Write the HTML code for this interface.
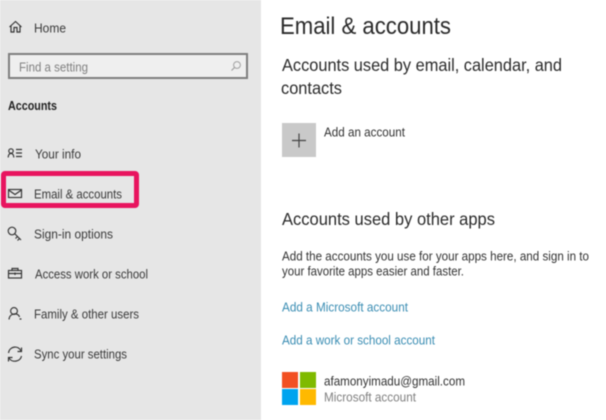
<!DOCTYPE html>
<html lang="en">
<head>
<meta charset="utf-8">
<title>Email &amp; accounts</title>
<style>
html,body{margin:0;padding:0;background:#fff;width:606px;height:420px;overflow:hidden}
svg{display:block;filter:blur(0.45px)}
text{font-family:"Liberation Sans",sans-serif;font-size:13px;fill:#333;transform:translateY(.5px)}
text.h{transform:none}
.nav{fill:#3a3a3a}
.ic{fill:none;stroke:#333;stroke-width:1.15}
.link{fill:#3a8db3}
</style>
</head>
<body>
<svg width="606" height="420" viewBox="0 0 606 420" xmlns="http://www.w3.org/2000/svg">
<rect x="0" y="0" width="606" height="420" fill="#fff"/>
<rect x="0" y="0" width="261" height="420" fill="#e6e6e6"/>

<!-- Home -->
<path class="ic" d="M9.5 27 15.5 21.5 21.5 27M11 25.5V32H14V27.5H17V32H20V25.5"/>
<text class="nav" x="34" y="32" textLength="32" lengthAdjust="spacingAndGlyphs">Home</text>

<!-- Search -->
<rect x="9" y="54" width="238" height="24" fill="#efefef" stroke="#7f7f7f" stroke-width="2"/>
<text x="19" y="71" style="fill:#808080" textLength="69" lengthAdjust="spacingAndGlyphs">Find a setting</text>
<circle cx="237" cy="65" r="3.4" fill="none" stroke="#a0a0a0" stroke-width="1"/>
<path d="M234.5 67.5 231.5 70.5" stroke="#a0a0a0" stroke-width="1.2" fill="none"/>

<text class="h" x="8" y="110" style="font-weight:700;fill:#222" textLength="49" lengthAdjust="spacingAndGlyphs">Accounts</text>

<!-- Your info -->
<circle class="ic" cx="11" cy="151" r="2.2"/>
<path class="ic" d="M8.2 157.5C8.2 152 13.8 152 13.8 157.5M16 149.5H22M16 153H22M16 156.5H22"/>
<text class="nav" x="35" y="158" textLength="46" lengthAdjust="spacingAndGlyphs">Your info</text>

<!-- Email -->
<rect class="ic" x="8.5" y="189.5" width="13" height="8"/>
<path class="ic" d="M8.5 190 15 194.5 21.5 190"/>
<text class="nav" x="34" y="198" textLength="88" lengthAdjust="spacingAndGlyphs">Email &amp; accounts</text>
<rect x="3.5" y="173.5" width="133" height="32" rx="1.5" fill="none" stroke="#e8145f" stroke-width="5"/>

<!-- Sign-in -->
<circle class="ic" cx="12" cy="231" r="3.8"/>
<path class="ic" d="M14.5 233.5 21 240M17.5 236.5 15.5 238.5M19.5 238.5 17.5 240.5"/>
<text class="nav" x="34" y="238" textLength="79" lengthAdjust="spacingAndGlyphs">Sign-in options</text>

<!-- Access work -->
<rect class="ic" x="8.5" y="270.5" width="13" height="7.5"/>
<path class="ic" d="M12 270.5V268.5H18V270.5M8.5 273.5H21.5M15 272.5V275"/>
<text class="nav" x="35" y="278" textLength="113" lengthAdjust="spacingAndGlyphs">Access work or school</text>

<!-- Family -->
<circle class="ic" cx="14" cy="311" r="3.4"/>
<path class="ic" d="M9 319.5C9.5 312.5 18.5 312.5 19.5 317"/>
<path d="M19.5 319h2" stroke="#333" stroke-width="1.2"/>
<text class="nav" x="34" y="318" textLength="105" lengthAdjust="spacingAndGlyphs">Family &amp; other users</text>

<!-- Sync -->
<path class="ic" d="M8.5 353C9.5 346 18.5 345 21 351M21.5 356C20.5 362 11.5 363 9 358"/>
<path class="ic" d="M21.5 347.5V351.5H17.5M8.5 361.5V357.5H12.5"/>
<text class="nav" x="34" y="358" textLength="93" lengthAdjust="spacingAndGlyphs">Sync your settings</text>

<!-- Main -->
<text class="h" x="280" y="34" style="font-size:24px;fill:#2a2a2a" textLength="171" lengthAdjust="spacingAndGlyphs">Email &amp; accounts</text>
<text class="h" x="282" y="71" style="font-size:17.5px;fill:#2a2a2a" textLength="280" lengthAdjust="spacingAndGlyphs">Accounts used by email, calendar, and</text>
<text class="h" x="281" y="94" style="font-size:17.5px;fill:#2a2a2a" textLength="61" lengthAdjust="spacingAndGlyphs">contacts</text>

<rect x="282" y="123" width="34" height="34" fill="#c9c9c9"/>
<path d="M292 140.5H306M299 133.5V147.5" stroke="#444" stroke-width="1.2" fill="none"/>
<text x="324" y="136" textLength="81" lengthAdjust="spacingAndGlyphs">Add an account</text>

<text class="h" x="282" y="225" style="font-size:17.5px;fill:#2a2a2a" textLength="213" lengthAdjust="spacingAndGlyphs">Accounts used by other apps</text>
<text x="282" y="260" textLength="307" lengthAdjust="spacingAndGlyphs">Add the accounts you use for your apps here, and sign in to</text>
<text x="282" y="275" textLength="182" lengthAdjust="spacingAndGlyphs">your favorite apps easier and faster.</text>

<text class="link" x="282" y="311" textLength="126" lengthAdjust="spacingAndGlyphs">Add a Microsoft account</text>
<text class="link" x="282" y="344" textLength="153" lengthAdjust="spacingAndGlyphs">Add a work or school account</text>

<!-- MS logo -->
<rect x="282" y="372" width="16" height="16" fill="#f25022"/>
<rect x="300" y="372" width="16" height="16" fill="#7fba00"/>
<rect x="282" y="389" width="16" height="16" fill="#00a4ef"/>
<rect x="300" y="389" width="16" height="16" fill="#ffb900"/>
<text x="324" y="385" textLength="141" lengthAdjust="spacingAndGlyphs">afamonyimadu@gmail.com</text>
<text x="324" y="401" style="fill:#808080" textLength="92" lengthAdjust="spacingAndGlyphs">Microsoft account</text>
</svg>
</body>
</html>
